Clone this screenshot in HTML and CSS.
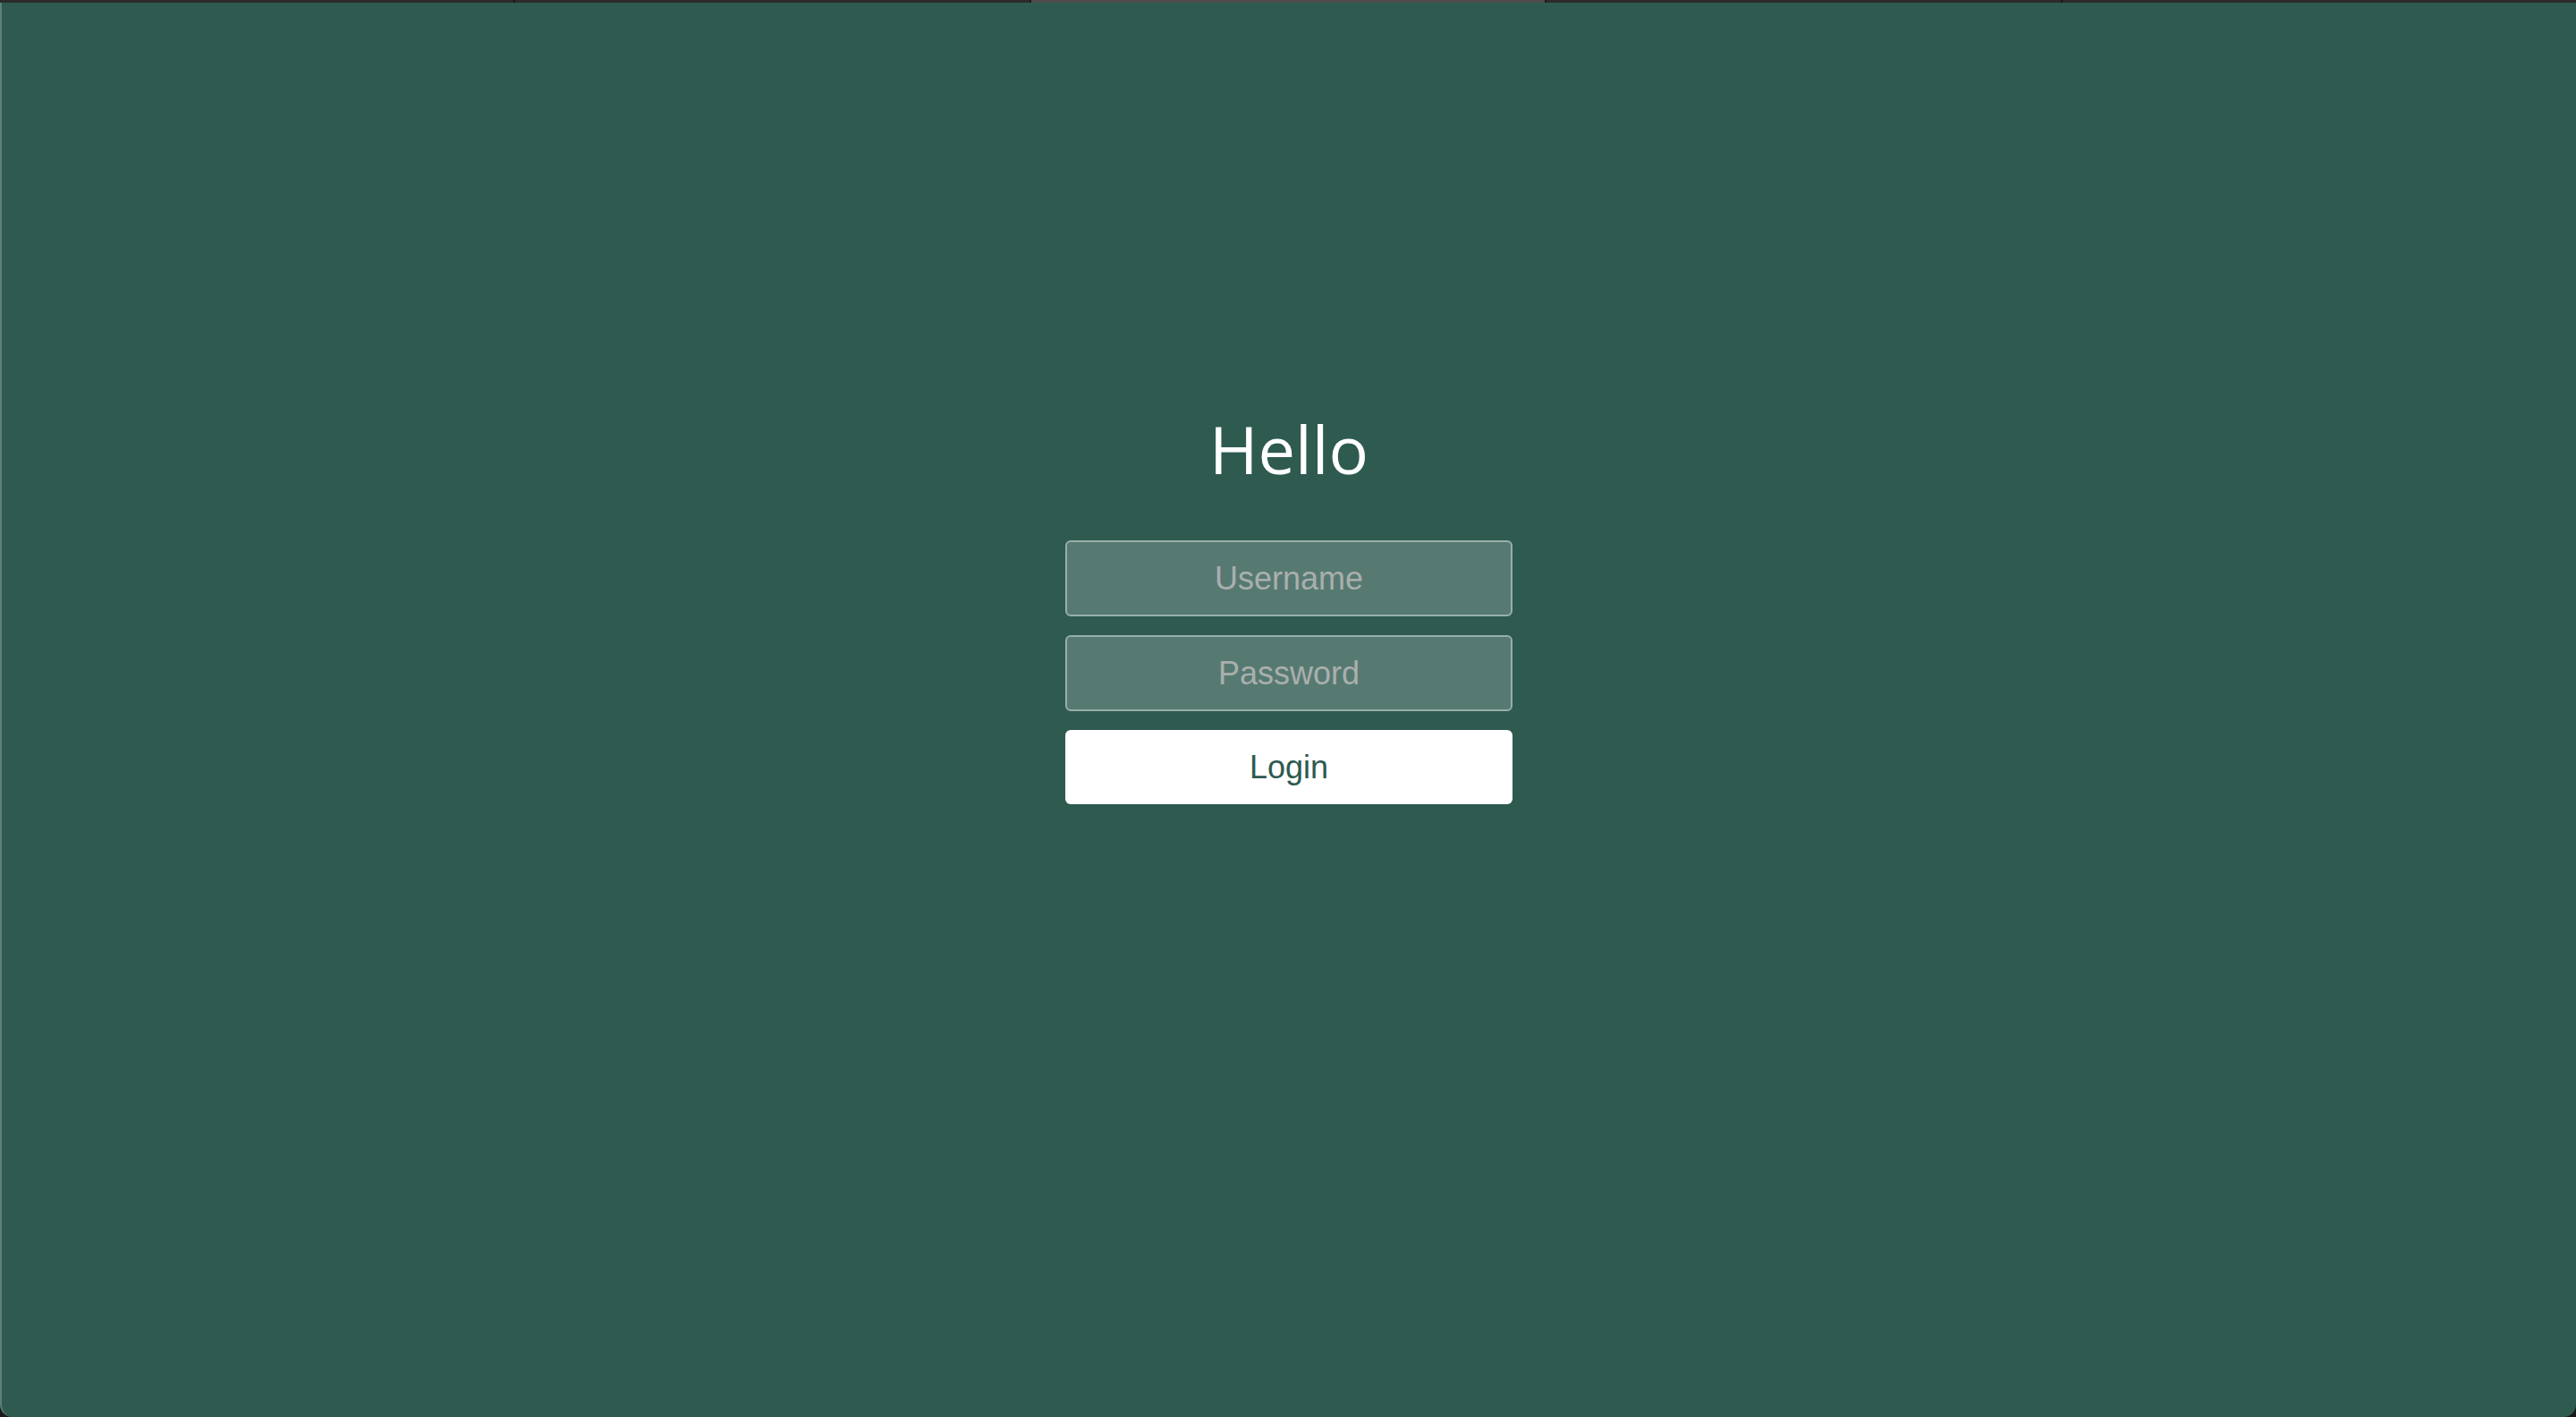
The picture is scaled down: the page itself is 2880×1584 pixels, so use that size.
FILE: index.html
```html
<!DOCTYPE html>
<html lang="en">
<head>
    <meta charset="UTF-8" />
    <meta name="viewport" content="width=device-width, initial-scale=1.0"/>
    <title>Login</title>
    <link rel="stylesheet" href="styles.css">
</head>
<body>

    <div class="topbar">
        <span></span>
        <span></span>
        <span class="active"></span>
        <span></span>
        <span></span>
    </div>

    <div class="screen">
        <div class="login-box">
            <h1>Hello</h1>
            <form class="login-form" onsubmit="return false;">
                <input type="text" id="username" placeholder="Username">
                <input type="password" id="password" placeholder="Password">
                <button type="submit">Login</button>
            </form>
        </div>
    </div>

</body>
</html>
```

FILE: styles.css
```css
html, body {
    height: 100%;
}
body {
    margin: 0;
    padding: 0;
    background-color: #1a1a1a;
    font-family: "Liberation Sans", Arial, sans-serif;
    display: flex;
    flex-direction: column;
}
.topbar {
    height: 3px;
    display: flex;
    gap: 2px;
    background-color: #1a1a1a;
}
.topbar span {
    flex: 1;
    background-color: #2b2b2b;
}
.topbar span.active {
    background-color: #4e4e4e;
}
.screen {
    flex: 1;
    background-color: #2e5a50;
    border-left: 2px solid #5d7f77;
    border-radius: 0 0 14px 14px;
    display: flex;
    justify-content: center;
}
.login-box {
    width: 500px;
    padding-top: 459px;
    display: flex;
    flex-direction: column;
    align-items: center;
}
h1 {
    margin: 0 0 62px;
    font-family: "Open Sans", sans-serif;
    font-weight: 400;
    font-size: 74px;
    line-height: 80px;
    color: #ffffff;
}
.login-form {
    width: 100%;
    display: flex;
    flex-direction: column;
    gap: 21px;
}
.login-form input {
    box-sizing: border-box;
    height: 85px;
    width: 100%;
    padding: 0 20px;
    border: 2px solid #98afa9;
    border-radius: 6px;
    background-color: #567a72;
    color: #ffffff;
    font-family: "Liberation Sans", Arial, sans-serif;
    font-size: 36px;
    text-align: center;
    outline: none;
}
.login-form input::placeholder {
    color: #aaafad;
}
.login-form button {
    height: 83px;
    width: 100%;
    border: none;
    border-radius: 6px;
    background-color: #ffffff;
    color: #2e5a50;
    font-family: "Liberation Sans", Arial, sans-serif;
    font-size: 36px;
    cursor: pointer;
}
```
